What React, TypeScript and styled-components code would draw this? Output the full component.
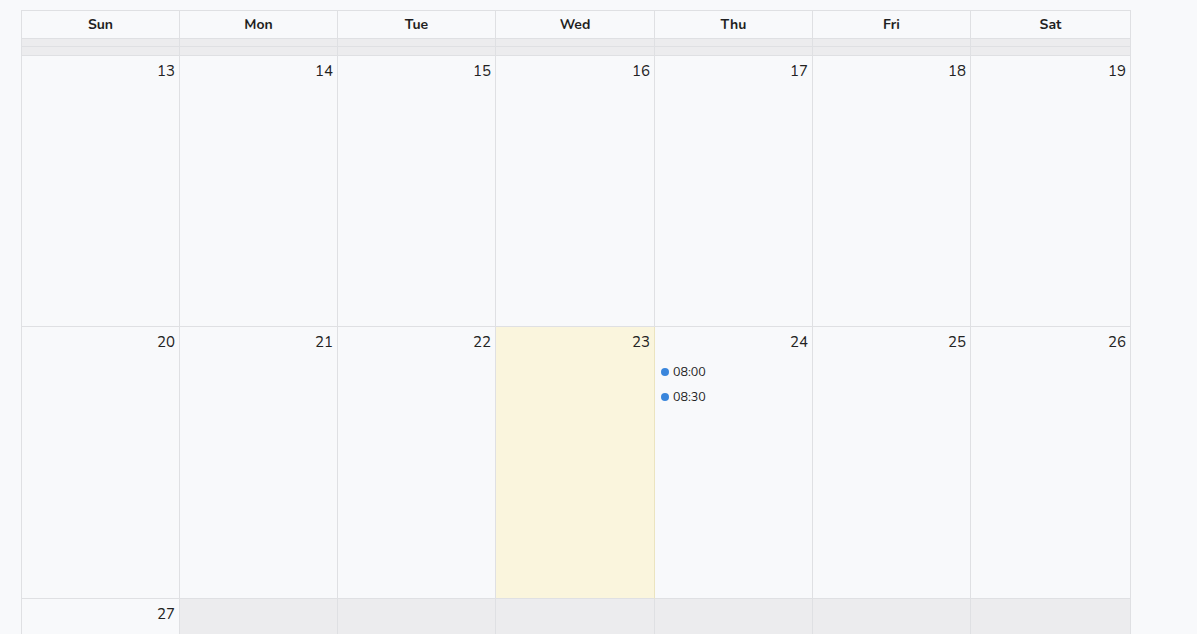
import React from "react";
import styled, { createGlobalStyle } from "styled-components";

const Global = createGlobalStyle`
  html, body { margin: 0; padding: 0; background: #f8f9fb; }
  body { font-family: "Nunito", "Lato", "Noto Sans", sans-serif; color: #222; }
`;

const Page = styled.div`
  padding: 10px 0 0 21px;
  height: 634px;
  box-sizing: border-box;
  overflow: hidden;
`;

const Grid = styled.div`
  width: 1110px;
  display: grid;
  grid-template-columns: 158px 158px 158px 159px 158px 158px 160px;
  grid-template-rows: 28px 8px 9px 271px 272px 271px;
  border-left: 1px solid #dfe0e3;
  border-top: 1px solid #dfe0e3;
  box-sizing: border-box;
`;

const HeadCell = styled.div`
  display: flex;
  align-items: center;
  justify-content: center;
  font-weight: 700;
  font-size: 14px;
  color: #1f1f22;
  border-right: 1px solid #dfe0e3;
  border-bottom: 1px solid #dfe0e3;
`;

const BarCell = styled.div`
  background: #ececee;
  border-right: 1px solid #dfe0e3;
  border-bottom: 1px solid #dfe0e3;
`;

const DayCell = styled.div<{ $today?: boolean; $other?: boolean }>`
  box-sizing: border-box;
  background: ${(p) => (p.$today ? "#faf5dd" : p.$other ? "#ececee" : "transparent")};
  border-right: 1px solid ${(p) => (p.$today ? "#ebe4c0" : "#dfe0e3")};
  border-bottom: 1px solid #dfe0e3;
  display: flex;
  flex-direction: column;
  padding: 5px 4px 0 6px;
`;

const DayNum = styled.div`
  text-align: right;
  font-size: 15px;
  line-height: 20px;
  color: #222;
`;

const Events = styled.div`
  margin-top: 11px;
  display: flex;
  flex-direction: column;
  gap: 7px;
`;

const Event = styled.div`
  display: flex;
  align-items: center;
  gap: 4px;
  font-size: 12.5px;
  line-height: 18px;
  color: #222;
`;

const Dot = styled.span`
  width: 8px;
  height: 8px;
  border-radius: 50%;
  background: #3a86dc;
  display: inline-block;
`;

const days = ["Sun", "Mon", "Tue", "Wed", "Thu", "Fri", "Sat"];

type Day = { n?: number; today?: boolean; other?: boolean; events?: string[] };

const weeks: Day[][] = [
  [13, 14, 15, 16, 17, 18, 19].map((n) => ({ n })),
  [
    { n: 20 },
    { n: 21 },
    { n: 22 },
    { n: 23, today: true },
    { n: 24, events: ["08:00", "08:30"] },
    { n: 25 },
    { n: 26 },
  ],
  [{ n: 27 }, ...Array.from({ length: 6 }, () => ({ other: true }))],
];

export default function App() {
  return (
    <>
      <Global />
      <Page>
        <Grid>
          {days.map((d) => (
            <HeadCell key={d}>{d}</HeadCell>
          ))}
          {days.map((d) => (
            <BarCell key={"a" + d} />
          ))}
          {days.map((d) => (
            <BarCell key={"b" + d} />
          ))}
          {weeks.map((w, wi) =>
            w.map((day, di) => (
              <DayCell key={wi + "-" + di} $today={day.today} $other={day.other}>
                {day.n !== undefined && <DayNum>{day.n}</DayNum>}
                {day.events && (
                  <Events>
                    {day.events.map((e) => (
                      <Event key={e}>
                        <Dot />
                        {e}
                      </Event>
                    ))}
                  </Events>
                )}
              </DayCell>
            ))
          )}
        </Grid>
      </Page>
    </>
  );
}
